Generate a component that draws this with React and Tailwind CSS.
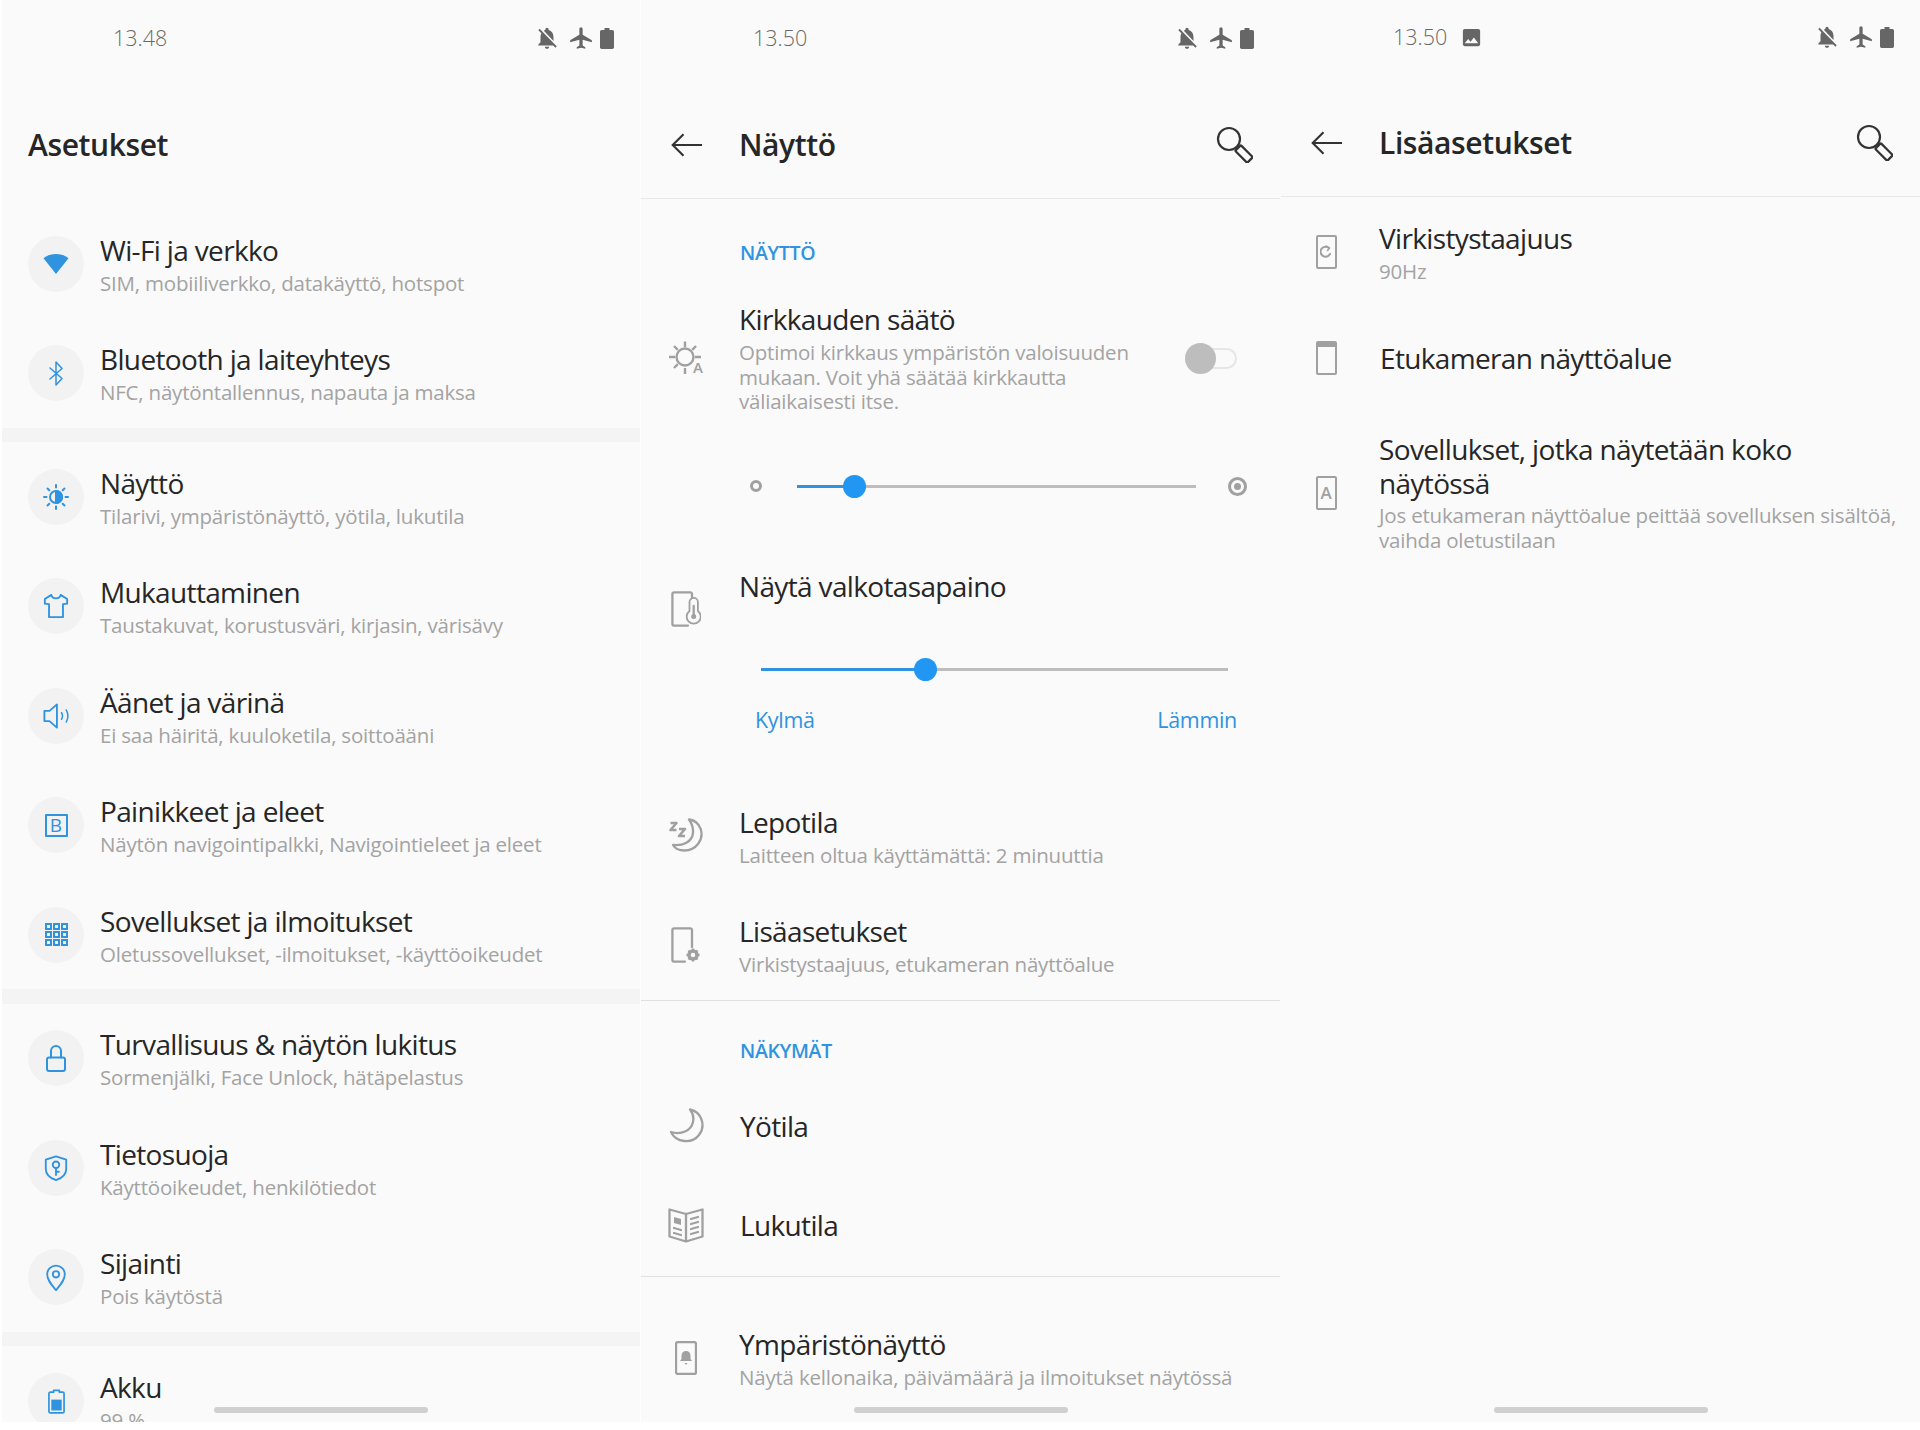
import { MdNotificationsOff, MdAirplanemodeActive, MdImage } from 'react-icons/md'

const blue = 'text-[#2f93e0]'

// status bar
function StatusBar({ time, image, h = 'h-[76px]' }) {
  return (
    <div className={`flex items-center justify-between pl-[113px] pr-[26px] text-[#6a6a6a] ${h}`}>
      <div className="flex items-center">
        <span className="text-[21.5px] font-light">{time}</span>
        {image && <MdImage size={23} className="ml-[13px] text-[#666]" />}
      </div>
      <div className="flex items-center text-[#666]">
        <MdNotificationsOff size={26} className="mr-[8px]" />
        <MdAirplanemodeActive size={26} className="mr-[6px]" />
        <svg width="14" height="21" viewBox="0 0 14 21" fill="currentColor">
          <path d="M4.5 0h5v2h2.8c.9 0 1.7.8 1.7 1.7v15.6c0 .9-.8 1.7-1.7 1.7H1.7C.8 21 0 20.2 0 19.3V3.7C0 2.8.8 2 1.7 2h2.8z" />
        </svg>
      </div>
    </div>
  )
}

function Header({ title }) {
  return (
    <div className="flex items-center justify-between h-[123px] pt-[15px] pl-[30px] pr-[27px] border-b border-[#e8e8e8] ml-px">
      <div className="flex items-center">
        <svg width="31" height="24" viewBox="0 0 31 24" fill="none" stroke="#333" strokeWidth="2.1" className="mr-[37px]">
          <path d="M31 12H2M12.5 1.2L1.7 12l10.8 10.8" />
        </svg>
        <h1 className="text-[30px] font-semibold tracking-[-0.4px] text-[#262626]">{title}</h1>
      </div>
      <svg width="37" height="37" viewBox="0 0 37 37" fill="none" stroke="#333" strokeWidth="2.2">
        <circle cx="13" cy="13" r="11" />
        <rect x="19.5" y="24" width="17" height="8" rx="1" strokeLinejoin="round" transform="rotate(45 28 28)" />
      </svg>
    </div>
  )
}

function Text({ title, sub }) {
  return (
    <div className="flex flex-col pt-[3px]">
      <div className="text-[28px] leading-[34px] tracking-[-0.65px] text-[#262626]">{title}</div>
      <div className="mt-px text-[20.5px] leading-[30px] tracking-[-0.2px] text-[#a3a3a3]">{sub}</div>
    </div>
  )
}

// rows of the main settings list
function MainRow({ icon, title, sub }) {
  return (
    <div className="flex items-center h-[109.4px]">
      <div className={`flex items-center justify-center shrink-0 w-[56px] h-[56px] ml-[28px] mr-[16px] rounded-full bg-[#f2f2f2] ${blue}`}>
        {icon}
      </div>
      <Text title={title} sub={sub} />
    </div>
  )
}

function Band() {
  return <div className="h-[14.5px] ml-[2px] bg-[#f4f4f4]" />
}

function Slot({ children }) {
  return <div className="flex items-center justify-center shrink-0 w-[92px] mr-[7px] text-[#a0a0a0]">{children}</div>
}

function Row({ icon, title, sub }) {
  return (
    <div className="flex items-center h-[109.4px]">
      <Slot>{icon}</Slot>
      <Text title={title} sub={sub} />
    </div>
  )
}

function PlainRow({ icon, title, h = 'h-[99.5px]' }) {
  return (
    <div className={`flex items-center ${h}`}>
      <Slot>{icon}</Slot>
      <div className="pl-px text-[28px] leading-[34px] tracking-[-0.65px] text-[#262626]">{title}</div>
    </div>
  )
}

function SectionLabel({ children, className }) {
  return (
    <div className={`pl-[100px] text-[19.5px] leading-[24px] font-semibold tracking-[-0.3px] text-[#2f93e0] ${className}`}>
      {children}
    </div>
  )
}

function HomeBar() {
  return <div className="absolute left-[214px] bottom-[9px] w-[214px] h-[6px] rounded-full bg-[#d0d0d0]" />
}

/* ---- icons ---- */
const s = { fill: 'none', stroke: 'currentColor', strokeWidth: 2, strokeLinecap: 'round', strokeLinejoin: 'round' }

const WifiIcon = (
  <svg width="26" height="20" viewBox="0 0 26 20" fill="currentColor"><path d="M13 0C8 0 3.6 1.6.5 4.2L13 20 25.5 4.2C22.4 1.6 18 0 13 0z" /></svg>
)
const BluetoothIcon = (
  <svg width="14" height="25" viewBox="0 0 14 25" {...s} strokeWidth="1.5"><path d="M1 7l12 10.5L7 24V1l6 6.5L1 18" /></svg>
)
const SunIcon = (
  <svg width="26" height="26" viewBox="0 0 26 26" {...s}>
    <circle cx="13" cy="13" r="6" />
    <path d="M13 7a6 6 0 010 12z" fill="currentColor" />
    <path d="M13 1v2.5M13 22.5V25M1 13h2.5M22.5 13H25M4.5 4.5l1.8 1.8M19.7 19.7l1.8 1.8M4.5 21.5l1.8-1.8M19.7 6.3l1.8-1.8" />
  </svg>
)
const ShirtIcon = (
  <svg width="26" height="26" viewBox="0 0 28 28" {...s}><path d="M9 2L2 6.5 2 11.5 6.5 12V26H21.5V12L26 11.5V6.5L19 2C18 7 10 7 9 2z" /></svg>
)
const SpeakerIcon = (
  <svg width="26" height="26" viewBox="0 0 28 28" {...s}><path d="M15 1.5L7 8.5H1.5v11H7l8 7z" /><path d="M20 10.5c1.5 2.5 1.5 4.5 0 7M25 7.5c2.5 4.5 2.5 8.5 0 13" strokeWidth="1.6" /></svg>
)
const BoxBIcon = (
  <div className="flex items-center justify-center w-[23px] h-[23px] rounded-[1px] border-2 border-current text-[19px] font-medium leading-none">B</div>
)
const GridIcon = (
  <div className="grid grid-cols-3 gap-[1px]">
    {[0, 1, 2, 3, 4, 5, 6, 7, 8].map(i => <div key={i} className="w-[7px] h-[7px] border-2 border-current" />)}
  </div>
)
const LockIcon = (
  <svg width="20" height="27" viewBox="0 0 20 27" {...s}><rect x="1" y="12.5" width="18" height="13.5" rx="2" /><path d="M5 12.5V6a5 5 0 0110 0v6.5" /></svg>
)
const ShieldIcon = (
  <svg width="24" height="26" viewBox="0 0 24 28" {...s}><path d="M12 1.5L23 5v10c0 6-5 10-11 12C6 25 1 21 1 15V5z" /><circle cx="12" cy="10.5" r="3.5" /><path d="M12 14v7.5M12 18h3" /></svg>
)
const PinIcon = (
  <svg width="20" height="27" viewBox="0 0 22 30" {...s}><path d="M11 29C6 23 1.2 18 1.2 11.5a9.8 9.8 0 0119.6 0C20.8 18 16 23 11 29z" /><circle cx="11" cy="11.5" r="3.5" /></svg>
)
const BatteryIcon = (
  <svg width="17" height="25" viewBox="0 0 18 26" {...s} strokeWidth="1.8">
    <path d="M6 3V1.2h6V3h3.5c.8 0 1.5.7 1.5 1.5v19c0 .8-.7 1.5-1.5 1.5h-13C1.7 25 1 24.3 1 23.5v-19C1 3.7 1.7 3 2.5 3z" />
    <rect x="3.5" y="11" width="11" height="11.5" fill="currentColor" stroke="none" />
  </svg>
)
const SunAutoIcon = (
  <div className="relative w-[36px] h-[36px]">
    <svg width="36" height="36" viewBox="0 0 36 36" {...s} strokeWidth="2.4" strokeLinecap="butt">
      <circle cx="17" cy="17" r="8.5" />
      <path d="M17 1.5V7M1 17h6M27 17h6M6 6l3.8 3.8M28 6l-3.8 3.8M6 28l3.8-3.8M17 28v6" />
    </svg>
    <span className="absolute left-[25px] top-[20px] text-[15px] font-semibold leading-none">A</span>
  </div>
)
const ThermoIcon = (
  <svg width="30" height="36" viewBox="0 0 30 36" {...s} strokeWidth="2.3">
    <path d="M21 6V3c0-1-.8-1.6-1.6-1.6H3c-1 0-1.6.8-1.6 1.6v30c0 1 .8 1.6 1.6 1.6h14" />
    <path d="M18.5 20V11a4.2 4.2 0 018.4 0v9a7 7 0 11-8.4 0z" strokeWidth="1.8" />
    <circle cx="22.7" cy="25.5" r="2.5" fill="currentColor" stroke="none" />
    <path d="M22.7 15v10" />
  </svg>
)
const SleepIcon = (
  <svg width="34" height="35" viewBox="0 0 34 35" {...s} strokeWidth="2.3">
    <path d="M20 1.5C32 3 36 17 29 26 22 35 8 34 4 27c10 1 19-3 20-12 .5-6-1.5-10-4-13.5z" />
    <path d="M1.5 5h6l-6 7h6M10 11h6l-6 7h6" strokeWidth="2.6" strokeLinecap="butt" />
  </svg>
)
const PhoneGearIcon = (
  <svg width="30" height="36" viewBox="0 0 30 36" {...s} strokeWidth="2.3">
    <path d="M21 20V3c0-1-.8-1.6-1.6-1.6H3c-1 0-1.6.8-1.6 1.6v30c0 1 .8 1.6 1.6 1.6h11" />
    <circle cx="22" cy="28" r="4" fill="none" strokeWidth="3.5" />
    <path d="M22 21.5v2M22 32.5v2M15.5 28h2M26.5 28h2M17.5 23.5l1.4 1.4M25.1 31.1l1.4 1.4M17.5 32.5l1.4-1.4M25.1 24.9l1.4-1.4" strokeWidth="2.4" strokeLinecap="butt" />
  </svg>
)
const MoonIcon = (
  <svg width="35" height="35" viewBox="0 0 35 35" {...s} strokeWidth="2.3">
    <path d="M21 1.5C33 4 37 18 30 27 23 36 7 35 2 24c10 3 20-1 22-10 1-5 0-9-3-12.5z" />
  </svg>
)
const BookIcon = (
  <svg width="36" height="35" viewBox="0 0 36 35" {...s} strokeWidth="2.3">
    <path d="M18 6L1.500 1.500v27L18 33.500l16.500-5v-27z" />
    <path d="M18 6v27" />
    <path d="M6 9l7 2v6l-7-2z" fill="currentColor" stroke="none" />
    <path d="M6 20l7 2M6 25l7 2M23 11l7-2M23 16l7-2M23 21l7-2M23 26l7-2" />
  </svg>
)
const PhoneBellIcon = (
  <svg width="22" height="34" viewBox="0 0 22 34" {...s} strokeWidth="2.3">
    <rect x="1" y="1" width="20" height="32" rx="2" />
    <path d="M11 10c-3 0-4.5 2-4.5 5v3L5 20h12l-1.5-2v-3c0-3-1.5-5-4.5-5z" fill="currentColor" stroke="none" />
    <path d="M9.5 22h3L11 24z" fill="currentColor" stroke="none" />
  </svg>
)
const PhoneFrame = ({ children, notch }) => (
  <div className={`relative flex items-center justify-center w-[21px] h-[34px] rounded-[2px] border-2 border-[#a0a0a0] ${notch ? 'border-t-[6px]' : ''}`}>
    {children}
  </div>
)

function Slider({ pad, width, fill, thumb }) {
  return (
    <div className="relative h-[3px] flex bg-[#bdbdbd]" style={{ marginLeft: pad, width }}>
      <div className="h-full bg-[#2f93e0]" style={{ width: fill }} />
      <div className="absolute top-[-10px] left-0 w-[23px] h-[23px] rounded-full bg-[#2196f3]" style={{ marginLeft: thumb }} />
    </div>
  )
}

function Panel({ children, className }) {
  return <div className={`relative shrink-0 w-[640px] h-[1422px] overflow-hidden bg-[#fafafa] ${className}`}>{children}</div>
}

export default function App() {
  return (
    <div className="flex w-[1920px] h-[1430px] bg-white font-['Open_Sans',sans-serif]">
      {/* main settings */}
      <Panel className="shadow-[inset_2px_0_0_#fff]">
        <StatusBar time="13.48" />
        <div className="flex items-center h-[133px] pt-[4px] pl-[28px]">
          <h1 className="text-[30px] font-semibold tracking-[-0.4px] text-[#262626]">Asetukset</h1>
        </div>
        <MainRow icon={WifiIcon} title="Wi-Fi ja verkko" sub="SIM, mobiiliverkko, datakäyttö, hotspot" />
        <MainRow icon={BluetoothIcon} title="Bluetooth ja laiteyhteys" sub="NFC, näytöntallennus, napauta ja maksa" />
        <Band />
        <MainRow icon={SunIcon} title="Näyttö" sub="Tilarivi, ympäristönäyttö, yötila, lukutila" />
        <MainRow icon={ShirtIcon} title="Mukauttaminen" sub="Taustakuvat, korustusväri, kirjasin, värisävy" />
        <MainRow icon={SpeakerIcon} title="Äänet ja värinä" sub="Ei saa häiritä, kuuloketila, soittoääni" />
        <MainRow icon={BoxBIcon} title="Painikkeet ja eleet" sub="Näytön navigointipalkki, Navigointieleet ja eleet" />
        <MainRow icon={GridIcon} title="Sovellukset ja ilmoitukset" sub="Oletussovellukset, -ilmoitukset, -käyttöoikeudet" />
        <Band />
        <MainRow icon={LockIcon} title="Turvallisuus & näytön lukitus" sub="Sormenjälki, Face Unlock, hätäpelastus" />
        <MainRow icon={ShieldIcon} title="Tietosuoja" sub="Käyttöoikeudet, henkilötiedot" />
        <MainRow icon={PinIcon} title="Sijainti" sub="Pois käytöstä" />
        <Band />
        <MainRow icon={BatteryIcon} title="Akku" sub="99 %" />
        <HomeBar />
      </Panel>

      {/* display */}
      <Panel className="shadow-[inset_1px_0_0_#fff]">
        <StatusBar time="13.50" />
        <Header title="Näyttö" />
        <SectionLabel className="pt-[42px]">NÄYTTÖ</SectionLabel>

        <div className="flex items-center mt-[37px]">
          <Slot>{SunAutoIcon}</Slot>
          <div className="w-[421px]">
            <div className="text-[28px] leading-[34px] tracking-[-0.65px] text-[#262626]">Kirkkauden säätö</div>
            <p className="mt-[4px] text-[20.5px] leading-[24.7px] tracking-[-0.2px] text-[#a3a3a3]">
              Optimoi kirkkaus ympäristön valoisuuden mukaan. Voit yhä säätää kirkkautta väliaikaisesti itse.
            </p>
          </div>
          <div className="relative ml-[25px] w-[52px] h-[21px] rounded-full border-2 border-[#e6e6e6]">
            <div className="absolute top-[-7px] left-[-2px] w-[31px] h-[31px] rounded-full bg-[#bdbdbd]" />
          </div>
        </div>

        <div className="flex items-center h-[24px] mt-[60px] pl-[110px]">
          <div className="w-[12px] h-[12px] rounded-full border-[3px] border-[#a0a0a0]" />
          <Slider pad="35px" width="399px" fill="58px" thumb="46px" />
          <div className="flex items-center justify-center ml-[32px] w-[19px] h-[19px] rounded-full border-[3px] border-[#a0a0a0]">
            <div className="w-[7px] h-[7px] rounded-full bg-[#a0a0a0]" />
          </div>
        </div>

        <div className="flex h-[79px] mt-[71px]">
          <Slot>{ThermoIcon}</Slot>
          <div className="text-[28px] leading-[34px] tracking-[-0.65px] text-[#262626]">Näytä valkotasapaino</div>
        </div>

        <div className="flex items-center h-[24px] mt-[9px]">
          <Slider pad="121px" width="467px" fill="164px" thumb="153px" />
        </div>

        <div className="flex justify-between mt-[25px] pl-[115px] pr-[43px] text-[21.5px] leading-[28px] tracking-[-0.3px] text-[#2f93e0]">
          <span>Kylmä</span>
          <span>Lämmin</span>
        </div>

        <div className="mt-[47px]">
          <Row icon={SleepIcon} title="Lepotila" sub="Laitteen oltua käyttämättä: 2 minuuttia" />
          <Row icon={PhoneGearIcon} title="Lisäasetukset" sub="Virkistystaajuus, etukameran näyttöalue" />
        </div>
        <div className="h-px ml-px bg-[#e0e0e0]" />
        <SectionLabel className="pt-[38px]">NÄKYMÄT</SectionLabel>
        <div className="mt-[14px]">
          <PlainRow icon={MoonIcon} title="Yötila" h="h-[98px]" />
          <PlainRow icon={BookIcon} title="Lukutila" h="h-[101px]" />
        </div>
        <div className="h-px ml-px bg-[#e0e0e0]" />
        <div className="mt-[26px]">
          <Row icon={PhoneBellIcon} title="Ympäristönäyttö" sub="Näytä kellonaika, päivämäärä ja ilmoitukset näytössä" />
        </div>
        <HomeBar />
      </Panel>

      {/* more settings */}
      <Panel>
        <StatusBar time="13.50" image h="h-[74px]" />
        <Header title="Lisäasetukset" />
        <Row
          icon={<PhoneFrame><svg width="12" height="13" viewBox="0 0 12 13" {...s}><path d="M10 9a5 5 0 11-1-6" /><path d="M6.5 1l3 2-2 2.5" strokeWidth="1.5" /></svg></PhoneFrame>}
          title="Virkistystaajuus"
          sub="90Hz"
        />
        <PlainRow icon={<PhoneFrame notch />} title="Etukameran näyttöalue" h="h-[104px]" />
        <div className="flex items-center mt-[22px]">
          <Slot><PhoneFrame><span className="text-[17px] font-semibold leading-none text-[#a0a0a0]">A</span></PhoneFrame></Slot>
          <div>
            <div className="w-[470px] text-[28px] leading-[34px] tracking-[-0.65px] text-[#262626]">Sovellukset, jotka näytetään koko näytössä</div>
            <p className="w-[525px] mt-[3px] text-[20.5px] leading-[25px] tracking-[-0.2px] text-[#a3a3a3]">
              Jos etukameran näyttöalue peittää sovelluksen sisältöä, vaihda oletustilaan
            </p>
          </div>
        </div>
        <HomeBar />
      </Panel>
    </div>
  )
}
